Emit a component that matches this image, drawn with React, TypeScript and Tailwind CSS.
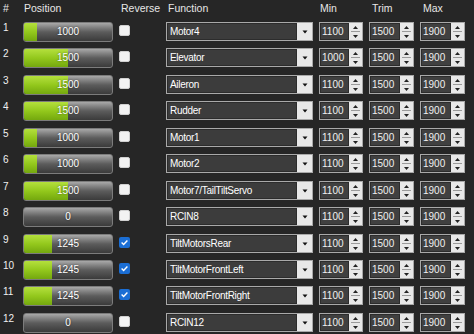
import React from "react";

type Row = {
  n: number;
  pos: number;
  rev: boolean;
  fn: string;
  min: number;
  trim: number;
  max: number;
  h: string;
};

const rows: Row[] = [
  { n: 1, pos: 1000, rev: false, fn: "Motor4", min: 1100, trim: 1500, max: 1900, h: "h-[26px]" },
  { n: 2, pos: 1500, rev: false, fn: "Elevator", min: 1000, trim: 1500, max: 1900, h: "h-[27px]" },
  { n: 3, pos: 1500, rev: false, fn: "Aileron", min: 1100, trim: 1500, max: 1900, h: "h-[26px]" },
  { n: 4, pos: 1500, rev: false, fn: "Rudder", min: 1100, trim: 1500, max: 1900, h: "h-[27px]" },
  { n: 5, pos: 1000, rev: false, fn: "Motor1", min: 1100, trim: 1500, max: 1900, h: "h-[26px]" },
  { n: 6, pos: 1000, rev: false, fn: "Motor2", min: 1100, trim: 1500, max: 1900, h: "h-[27px]" },
  { n: 7, pos: 1500, rev: false, fn: "Motor7/TailTiltServo", min: 1100, trim: 1500, max: 1900, h: "h-[26px]" },
  { n: 8, pos: 0, rev: false, fn: "RCIN8", min: 1100, trim: 1500, max: 1900, h: "h-[27px]" },
  { n: 9, pos: 1245, rev: true, fn: "TiltMotorsRear", min: 1100, trim: 1500, max: 1900, h: "h-[26px]" },
  { n: 10, pos: 1245, rev: true, fn: "TiltMotorFrontLeft", min: 1100, trim: 1500, max: 1900, h: "h-[26px]" },
  { n: 11, pos: 1245, rev: true, fn: "TiltMotorFrontRight", min: 1100, trim: 1500, max: 1900, h: "h-[27px]" },
  { n: 12, pos: 0, rev: false, fn: "RCIN12", min: 1100, trim: 1500, max: 1900, h: "h-[21px]" },
];

function Bar({ value }: { value: number }) {
  const pct = value <= 800 ? 0 : Math.min(1, (value - 800) / 1400);
  return (
    <div className="relative w-[90px] h-[20px] rounded-[3px] border border-[#7c7c7c] overflow-hidden bg-linear-to-b from-[#a9a9a9] via-[#5c5c5c] to-[#3b3b3b]">
      <div
        className="absolute left-0 top-0 bottom-0 bg-linear-to-b from-[#b4e03c] via-[#93c81c] to-[#74a80e]"
        style={{ width: `${pct * 88}px` }}
      />
      <div className="absolute inset-0 flex items-center justify-center text-[10px] text-white leading-none [text-shadow:0_0_2px_rgba(0,0,0,0.6)]">
        {value}
      </div>
    </div>
  );
}

function Check({ on }: { on: boolean }) {
  if (on) {
    return (
      <div className="w-[11px] h-[11px] rounded-[2px] bg-[#1b6ed4] flex items-center justify-center">
        <svg width="9" height="9" viewBox="0 0 9 9">
          <path d="M1.6 4.6 L3.6 6.5 L7.4 2.5" stroke="white" strokeWidth="1.4" fill="none" />
        </svg>
      </div>
    );
  }
  return <div className="w-[11px] h-[11px] rounded-[2px] bg-[#f2f2f2] border border-[#d0d0d0]" />;
}

function Combo({ text }: { text: string }) {
  return (
    <div className="flex w-[147px] h-[19px] border border-[#a9a9a9] bg-[#e8e8e8]">
      <div className="flex-1 bg-[#3c3c3c] border border-[#2c2c2c] flex items-center pl-[2px] text-[10px] text-white leading-none tracking-[-0.3px] whitespace-nowrap overflow-hidden">
        {text}
      </div>
      <div className="w-[15px] flex items-center justify-center">
        <svg width="6" height="4" viewBox="0 0 6 4">
          <path d="M0.5 0.5 L5.5 0.5 L3 3.5 Z" fill="#111" />
        </svg>
      </div>
    </div>
  );
}

function Spin({ value, w }: { value: number; w: string }) {
  return (
    <div className={`flex h-[19px] border border-[#a9a9a9] bg-[#e8e8e8] ${w}`}>
      <div className="flex-1 bg-[#404040] border border-[#2c2c2c] flex items-center pl-[1px] text-[10px] text-[#f0f0f0] leading-none">
        {value}
      </div>
      <div className="w-[13px] flex flex-col items-center justify-center">
        <div className="flex-1 flex items-center justify-center">
          <svg width="5" height="3" viewBox="0 0 5 3">
            <path d="M0 3 L5 3 L2.5 0 Z" fill="#222" />
          </svg>
        </div>
        <div className="w-[9px] h-px bg-[#9a9a9a]" />
        <div className="flex-1 flex items-center justify-center">
          <svg width="5" height="3" viewBox="0 0 5 3">
            <path d="M0 0 L5 0 L2.5 3 Z" fill="#222" />
          </svg>
        </div>
      </div>
    </div>
  );
}

export default function App() {
  return (
    <div
      className="w-[474px] h-[334px] overflow-hidden bg-[#262626] text-white"
      style={{ fontFamily: '"Liberation Sans", Arial, sans-serif' }}
    >
      <div className="flex h-[22px] pt-[2px] text-[10.5px] text-[#e6e6e6] leading-[13px]">
        <div className="w-[23px] pl-[3px]">#</div>
        <div className="w-[97px] pl-[1px]">Position</div>
        <div className="w-[47px] pl-[1px]">Reverse</div>
        <div className="w-[152px] pl-[1px]">Function</div>
        <div className="w-[51px] pl-[1px]">Min</div>
        <div className="w-[51px] pl-[2px]">Trim</div>
        <div className="w-[53px] pl-[2px]">Max</div>
      </div>
      {rows.map((r) => (
        <div key={r.n} className={`flex items-start ${r.h}`}>
          <div className="w-[23px] pl-[3px] text-[10px] leading-[12px] text-[#f0f0f0]">{r.n}</div>
          <Bar value={r.pos} />
          <div className="ml-[6px] mt-[3px] w-[47px]">
            <Check on={r.rev} />
          </div>
          <Combo text={r.fn} />
          <div className="ml-[6px]">
            <Spin value={r.min} w="w-[44px]" />
          </div>
          <div className="ml-[6px]">
            <Spin value={r.trim} w="w-[45px]" />
          </div>
          <div className="ml-[6px]">
            <Spin value={r.max} w="w-[45px]" />
          </div>
        </div>
      ))}
    </div>
  );
}
